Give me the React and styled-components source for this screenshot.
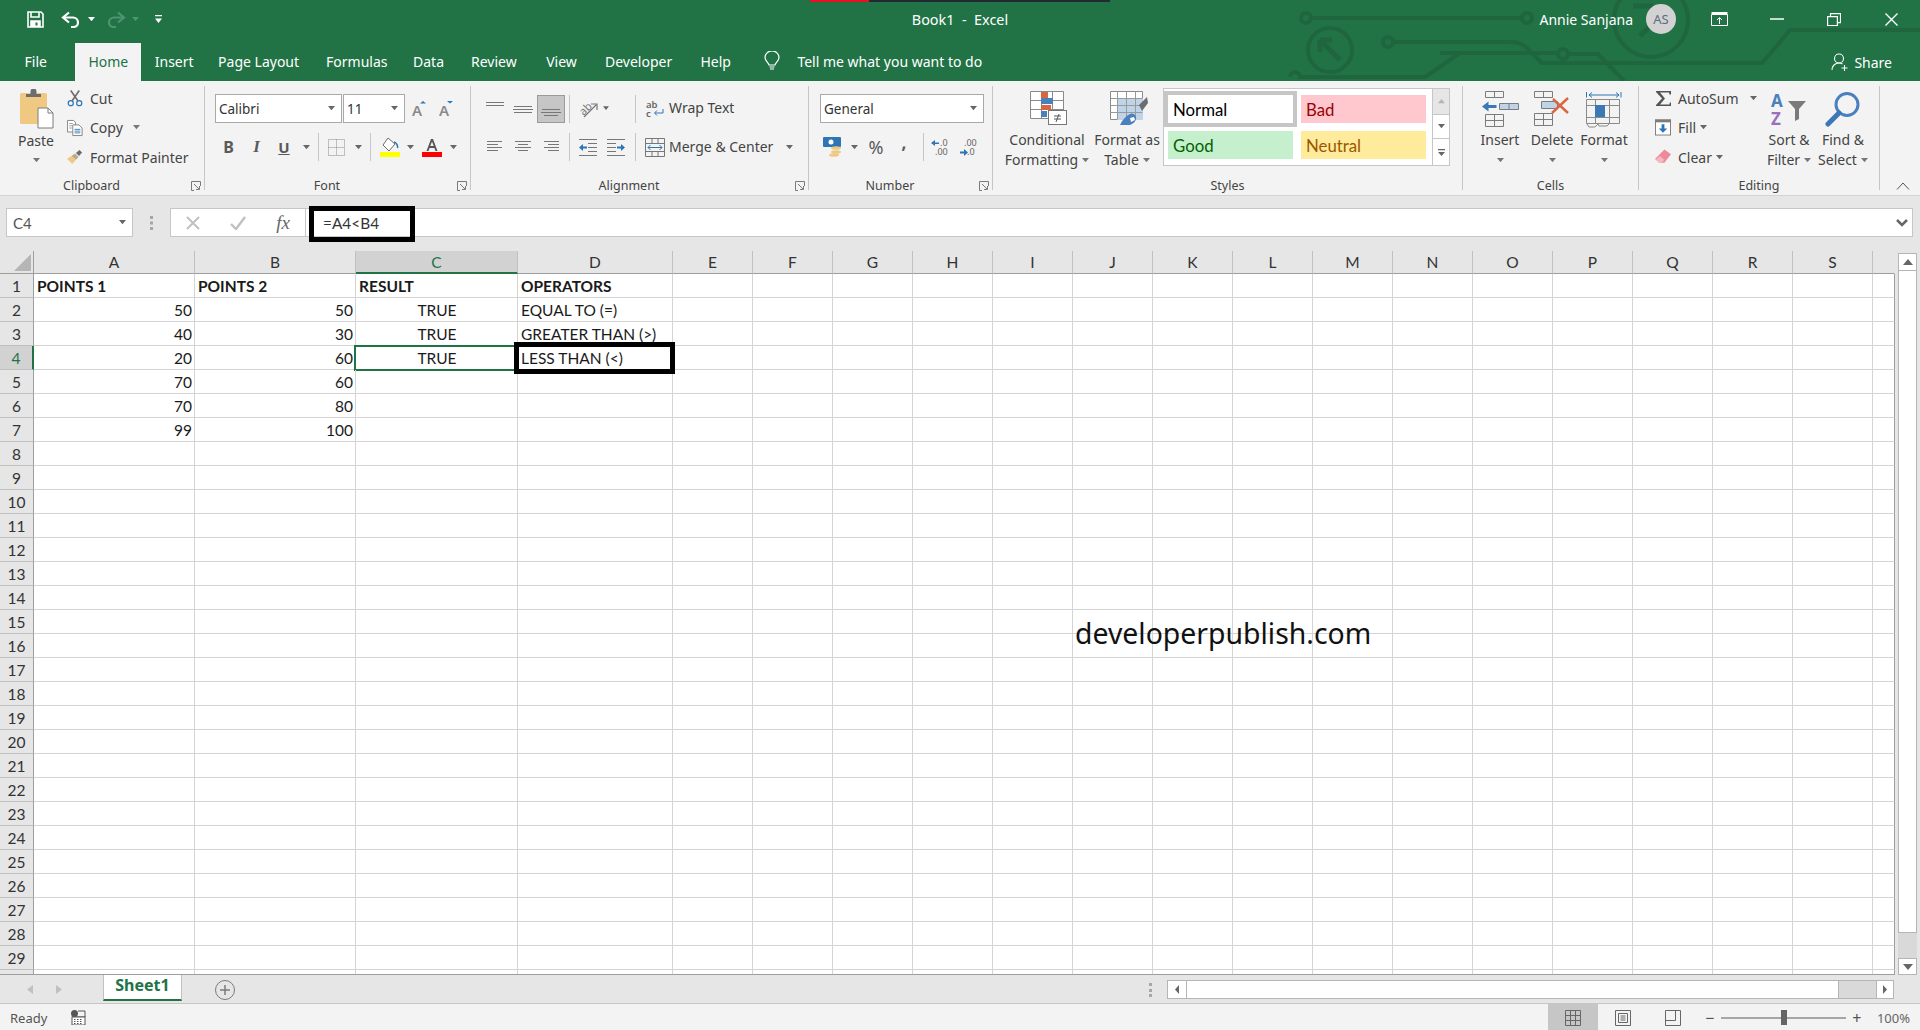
import React from "react";
import styled, { createGlobalStyle } from "styled-components";

const GlobalStyle = createGlobalStyle`
  html, body {
    margin: 0;
    padding: 0;
    overflow: hidden;
    background: #e6e6e6;
  }
  * {
    box-sizing: border-box;
  }
`;

const UI_FONT = `"Noto Sans", "Open Sans", sans-serif`;
const CELL_FONT = `Lato, "Noto Sans", sans-serif`;

const Page = styled.div`
  width: 1920px;
  height: 1030px;
  display: flex;
  flex-direction: column;
  overflow: hidden;
  font-family: ${UI_FONT};
  color: #444;
`;

/* title bar */
const TitleBar = styled.header`
  position: relative;
  height: 81px;
  background: #217346;
  color: #fff;
  flex: none;
`;

const Circuit = styled.svg`
  position: absolute;
  left: 0;
  top: 0;
  pointer-events: none;
`;

const LoadingLine = styled.div`
  position: absolute;
  left: 810px;
  top: 0;
  width: 300px;
  height: 2px;
  background: linear-gradient(90deg, #e81123 0 59px, #1f2a33 59px);
`;

const TopRow = styled.div`
  position: relative;
  height: 43px;
  display: grid;
  grid-template-columns: 1fr auto 1fr;
  align-items: center;
  padding-bottom: 5px;
`;

const Qat = styled.div`
  display: flex;
  align-items: center;
  padding-left: 26px;
`;

const QatSlot = styled.span`
  display: flex;
  align-items: center;
  justify-content: center;
  width: ${(p) => p.$w}px;
  margin-right: ${(p) => p.$gap || 0}px;
`;

const DocTitle = styled.div`
  font-size: 14.4px;
  white-space: pre;
`;

const WindowArea = styled.div`
  display: flex;
  align-items: center;
  justify-content: flex-end;
`;

const UserName = styled.span`
  font-size: 14px;
  margin-right: 13px;
`;

const Avatar = styled.span`
  width: 30px;
  height: 30px;
  border-radius: 50%;
  background: #d2d2d2;
  color: #5b6b7b;
  font-size: 13px;
  display: flex;
  align-items: center;
  justify-content: center;
  margin-right: 14px;
`;

const WinBtn = styled.span`
  width: ${(p) => p.$w}px;
  display: flex;
  justify-content: center;
`;

const TabRow = styled.nav`
  position: relative;
  height: 38px;
  display: flex;
  align-items: stretch;
  padding-left: 11px;
  font-size: 14px;
`;

const Tab = styled.span`
  display: flex;
  align-items: center;
  padding: 0 ${(p) => (p.$active ? 13 : 13.5)}px 2px;
  background: ${(p) => (p.$active ? "#f3f3f3" : "transparent")};
  color: ${(p) => (p.$active ? "#217346" : "#fff")};
  margin-right: ${(p) => p.$mr || 0}px;
`;

const TellMe = styled.span`
  display: flex;
  align-items: center;
  gap: 17px;
  margin-left: 20px;
  padding-bottom: 2px;
  color: #fff;
`;

const ShareBtn = styled.span`
  display: flex;
  align-items: center;
  gap: 5px;
  margin-left: auto;
  margin-right: 28px;
  padding-top: 1px;
  color: #fff;
`;

/* ribbon */
const Ribbon = styled.div`
  height: 115px;
  flex: none;
  background: #f3f3f3;
  border-bottom: 1px solid #d4d4d4;
  padding-top: 5px;
  display: flex;
  font-size: 14px;
`;

const Group = styled.section`
  position: relative;
  width: ${(p) => p.$w}px;
  height: 104px;
  border-right: 1px solid ${(p) => (p.$last ? "transparent" : "#c6c6c6")};
  flex: none;
`;

const GroupBody = styled.div`
  height: 90px;
  padding: ${(p) => p.$pad || "0"};
  display: ${(p) => (p.$col ? "block" : "flex")};
`;

const GroupLabel = styled.div`
  height: 14px;
  line-height: 20px;
  text-align: center;
  font-size: 12.5px;
  white-space: nowrap;
  padding-right: ${(p) => (p.$launch ? 21 : 0)}px;
`;

const Launcher = styled.svg`
  position: absolute;
  right: 3px;
  bottom: -1px;
`;

const Collapse = styled.svg`
  position: absolute;
  left: 16px;
  bottom: 0;
`;

const Paste = styled.div`
  width: 46px;
  display: flex;
  flex-direction: column;
  align-items: center;
  flex: none;
`;

const LargeBtn = styled.div`
  width: ${(p) => p.$w}px;
  margin-left: ${(p) => p.$ml || 0}px;
  display: flex;
  flex-direction: column;
  align-items: center;
  flex: none;
  line-height: 20px;
  white-space: nowrap;
`;

const LargeIcon = styled.div`
  height: 44px;
  margin-top: 1px;
  margin-bottom: -1px;
  padding-left: ${(p) => p.$shift || 0}px;
  display: flex;
  align-items: center;
  justify-content: center;
`;

const CaretLine = styled.div`
  height: 20px;
  display: flex;
  align-items: center;
  gap: 4px;
`;

const SmallStack = styled.div`
  width: ${(p) => p.$w}px;
  margin-left: ${(p) => p.$ml || 0}px;
  display: flex;
  flex-direction: column;
  gap: 5.5px;
  flex: none;
`;

const SmallRow = styled.div`
  height: 24px;
  display: flex;
  align-items: center;
  white-space: nowrap;
`;

const SmallIcon = styled.span`
  width: 16px;
  margin-right: 7px;
  display: flex;
  align-items: center;
  justify-content: center;
  flex: none;
`;

const ToolRow = styled.div`
  display: flex;
  align-items: center;
  height: ${(p) => p.$h || 28}px;
  margin-top: ${(p) => p.$mt || 0}px;
  white-space: nowrap;
`;

const Slot = styled.span`
  width: ${(p) => p.$w}px;
  height: 28px;
  margin-left: ${(p) => p.$ml || 0}px;
  display: flex;
  align-items: center;
  justify-content: center;
  flex: none;
  background: ${(p) => (p.$on ? "#c6c6c6" : "transparent")};
  box-shadow: ${(p) => (p.$on ? "inset 0 0 0 1px #9a9a9a" : "none")};
`;

const ToolLabel = styled.span`
  margin-left: ${(p) => p.$ml}px;
  margin-top: -2px;
`;

const ToolGlyph = styled.span`
  font-size: ${(p) => p.$size}px;
  font-weight: ${(p) => (p.$bold ? 700 : 400)};
  font-style: ${(p) => (p.$italic ? "italic" : "normal")};
  font-family: ${(p) => (p.$serif ? `"Liberation Serif", serif` : "inherit")};
  text-decoration: ${(p) => (p.$under ? "underline" : "none")};
  margin-top: ${(p) => p.$mt || 0}px;
  color: #5a5a5a;
`;

const ToolSep = styled.span`
  width: ${(p) => p.$w}px;
  height: 28px;
  flex: none;
  display: flex;
  justify-content: center;
  &::before {
    content: "";
    width: 1px;
    background: #c6c6c6;
  }
`;

const Combo = styled.div`
  width: ${(p) => p.$w}px;
  height: 29px;
  flex: none;
  margin-left: ${(p) => p.$ml || 0}px;
  background: #fff;
  border: 1px solid #a9a9a9;
  display: flex;
  align-items: center;
  justify-content: space-between;
  padding: 0 6px 0 3px;
  color: #333;
  font-size: 13.5px;
`;

const Gallery = styled.div`
  width: 287px;
  height: 78px;
  margin: 2px 0 0 0;
  flex: none;
  display: flex;
  background: #fff;
  border: 1px solid #c6c6c6;
`;

const StyleGrid = styled.div`
  width: 268px;
  padding: 6px 0 0 4px;
  display: grid;
  grid-template-columns: 125px 125px;
  grid-auto-rows: 28px;
  gap: 8px;
`;

const StyleCell = styled.div`
  background: ${(p) => p.$bg};
  color: ${(p) => p.$fg};
  outline: ${(p) => (p.$on ? "4px solid #c6c6c6" : "none")};
  font-family: ${CELL_FONT};
  font-size: 16.8px;
  display: flex;
  align-items: center;
  padding-left: 5px;
`;

const GalleryScroll = styled.div`
  flex: 1;
  border-left: 1px solid #c6c6c6;
  display: flex;
  flex-direction: column;
`;

const ScrollStep = styled.div`
  height: ${(p) => p.$h}px;
  background: ${(p) => (p.$off ? "#e6e6e6" : "#fff")};
  border-bottom: ${(p) => (p.$end ? "none" : "1px solid #c6c6c6")};
  display: flex;
  align-items: center;
  justify-content: center;
`;

/* formula bar */
const FormulaBar = styled.div`
  height: 55px;
  flex: none;
  background: #e6e6e6;
  padding: 12px 7px 0 6px;
  display: flex;
  align-items: flex-start;
`;

const NameBox = styled.div`
  width: 127px;
  height: 29px;
  background: #fff;
  border: 1px solid #c6c6c6;
  display: flex;
  align-items: center;
  justify-content: space-between;
  padding: 0 6px;
  font-family: ${CELL_FONT};
  font-size: 15px;
  color: #555;
`;

const Dots = styled.span`
  width: 37px;
  height: 29px;
  display: flex;
  align-items: center;
  justify-content: center;
`;

const FormulaTools = styled.div`
  width: 136px;
  height: 29px;
  background: #fff;
  border: 1px solid #c6c6c6;
  display: grid;
  grid-template-columns: 44px 46px 44px;
  align-items: center;
  justify-items: center;
`;

const FxMark = styled.i`
  font-family: "Liberation Serif", serif;
  font-size: 19px;
  color: #666;
`;

const FormulaInput = styled.div`
  position: relative;
  flex: 1;
  height: 29px;
  background: #fff;
  border: 1px solid #c6c6c6;
  border-left: none;
  display: flex;
  align-items: center;
  padding-left: 17px;
  font-family: ${CELL_FONT};
  font-size: 15.4px;
  color: #333;
`;

const Mark = styled.div`
  position: absolute;
  border: 5px solid #000;
  pointer-events: none;
  left: ${(p) => p.$l}px;
  top: ${(p) => p.$t}px;
  width: ${(p) => p.$w}px;
  height: ${(p) => p.$h}px;
  z-index: 3;
`;

const FormulaCaret = styled.svg`
  position: absolute;
  right: 4px;
  top: 10px;
`;

/* sheet */
const SheetArea = styled.div`
  height: 724px;
  flex: none;
  display: flex;
  background: #e6e6e6;
`;

const SheetGrid = styled.div`
  position: relative;
  width: 1895px;
  height: 724px;
  overflow: hidden;
  background: #fff;
  display: grid;
  grid-template-columns: 34px 161px 161px 162px 155px repeat(15, 80px) 22px;
  grid-template-rows: 23px repeat(30, 24px);
  font-family: ${CELL_FONT};
  font-size: 15.5px;
  color: #1a1a1a;
  border-bottom: 1px solid #9e9e9e;
`;

const Corner = styled.div`
  background: #e6e6e6;
  border-right: 1px solid #9e9e9e;
  border-bottom: 1px solid #9e9e9e;
  display: flex;
  align-items: flex-end;
  justify-content: flex-end;
  padding: 0 2px 2px 0;
`;

const ColHead = styled.div`
  background: ${(p) => (p.$on ? "#d2d2d2" : "#e6e6e6")};
  color: ${(p) => (p.$on ? "#217346" : "#333")};
  border-right: 1px solid ${(p) => (p.$blank ? "transparent" : "#c0c0c0")};
  border-bottom: ${(p) => (p.$on ? "2px solid #217346" : "1px solid #9e9e9e")};
  display: flex;
  align-items: center;
  justify-content: center;
`;

const RowHead = styled.div`
  background: ${(p) => (p.$on ? "#d2d2d2" : "#e6e6e6")};
  color: ${(p) => (p.$on ? "#217346" : "#333")};
  border-right: ${(p) => (p.$on ? "2px solid #217346" : "1px solid #9e9e9e")};
  border-bottom: 1px solid #c0c0c0;
  padding-top: 1px;
  display: flex;
  align-items: center;
  justify-content: center;
`;

const Cell = styled.div`
  position: relative;
  border-right: 1px solid ${(p) => (p.$edge ? "#9e9e9e" : "#d4d4d4")};
  border-bottom: 1px solid #d4d4d4;
  display: flex;
  align-items: center;
  justify-content: ${(p) => p.$align || "flex-start"};
  padding: 1px 2px 0 3px;
  font-weight: ${(p) => (p.$bold ? 700 : 400)};
  white-space: nowrap;
`;

const Selection = styled.div`
  position: absolute;
  left: -2px;
  top: -1px;
  right: -2px;
  bottom: -2px;
  border: 2px solid #217346;
`;

const Watermark = styled.div`
  position: absolute;
  left: 1075px;
  top: 363px;
  font-family: ${UI_FONT};
  font-size: 28.4px;
  color: #111;
  white-space: nowrap;
`;

const VScroll = styled.div`
  width: 25px;
  padding: 2px 3px 0 3px;
  display: flex;
  flex-direction: column;
`;

const ScrollBtn = styled.div`
  height: ${(p) => p.$h}px;
  flex: none;
  background: #fff;
  border: 1px solid #b5b5b5;
  display: flex;
  align-items: center;
  justify-content: center;
`;

const VThumb = styled.div`
  height: 662px;
  flex: none;
  background: #fff;
  border: 1px solid #b5b5b5;
  border-top: none;
`;

const VTrack = styled.div`
  flex: 1;
  background: #d9d9d9;
`;

/* sheet tabs */
const SheetBar = styled.div`
  height: 29px;
  flex: none;
  background: #e6e6e6;
  display: flex;
  align-items: flex-start;
  border-bottom: 1px solid #c6c6c6;
`;

const SheetNav = styled.div`
  width: 103px;
  height: 28px;
  display: flex;
  align-items: center;
  gap: 23px;
  padding-left: 27px;
`;

const SheetTab = styled.div`
  width: 79px;
  height: 26px;
  background: #fff;
  border: 1px solid #c0c0c0;
  border-top: none;
  border-bottom: 2px solid #217346;
  color: #217346;
  font-weight: 700;
  font-size: 16px;
  line-height: 20px;
  padding-bottom: 4px;
  display: flex;
  align-items: center;
  justify-content: center;
`;

const AddSheet = styled.div`
  width: 20px;
  height: 20px;
  margin: 5px 0 0 33px;
  border-radius: 50%;
  border: 1px solid #7b7b7b;
  display: flex;
  align-items: center;
  justify-content: center;
`;

const HScrollWrap = styled.div`
  margin-left: auto;
  margin-right: 26px;
  display: flex;
  align-items: center;
  height: 28px;
  padding-top: 1px;
`;

const VDots = styled.span`
  width: 3px;
  height: 14px;
  margin-right: 15px;
  background: repeating-linear-gradient(180deg, #a6a6a6 0 3px, transparent 3px 5.5px);
`;

const HScroll = styled.div`
  width: 727px;
  height: 19px;
  display: flex;
  background: #d9d9d9;
  border: 1px solid #b5b5b5;
`;

const HThumb = styled.div`
  width: 653px;
  background: #fff;
  border-left: 1px solid #b5b5b5;
  border-right: 1px solid #b5b5b5;
`;

const HBtn = styled.div`
  width: ${(p) => p.$w}px;
  margin-left: ${(p) => p.$ml || 0}px;
  background: #fff;
  border-left: ${(p) => (p.$ml ? "1px solid #b5b5b5" : "none")};
  display: flex;
  align-items: center;
  justify-content: center;
`;

/* status bar */
const StatusBar = styled.footer`
  height: 27px;
  flex: none;
  background: #f3f3f3;
  display: flex;
  align-items: center;
  font-size: 13px;
  color: #555;
  padding-left: 10px;
`;

const MacroIcon = styled.span`
  margin-left: 24px;
  display: flex;
`;

const ViewButtons = styled.div`
  margin-left: auto;
  display: flex;
  height: 100%;
`;

const ViewBtn = styled.span`
  width: 50px;
  display: flex;
  align-items: center;
  justify-content: center;
  background: ${(p) => (p.$on ? "#c6c6c6" : "transparent")};
`;

const ZoomBar = styled.div`
  display: flex;
  align-items: center;
  margin-left: 6px;
  padding-right: 10px;
`;

const ZoomSign = styled.span`
  font-size: 16px;
  width: 12px;
  text-align: center;
  color: #555;
`;

const Slider = styled.div`
  position: relative;
  width: 125px;
  height: 2px;
  background: #a6a6a6;
  margin: 0 5px;
`;

const SliderKnob = styled.span`
  position: absolute;
  left: 60px;
  top: -7px;
  width: 6px;
  height: 15px;
  background: #666;
`;

const ZoomPct = styled.span`
  margin-left: 14px;
  color: #666;
`;

/* --- drawings --- */
const Caret = ({ c = "#666", w = 7, up }) => (
  <svg width={w} height={w * 0.6} viewBox="0 0 7 4.2">
    <path d={up ? "M0 4.2h7L3.5 0z" : "M0 0h7L3.5 4.2z"} fill={c} />
  </svg>
);

const SaveIcon = () => (
  <svg width="17" height="17" viewBox="0 0 17 17" fill="none" stroke="#fff" strokeWidth="1.6">
    <path d="M1 1h13l2 2v13H1z" />
    <path d="M4 1v5h8V1" />
    <path d="M4 16v-6h9v6" fill="#fff" />
    <path d="M9.5 11.5v3" stroke="#217346" strokeWidth="2" />
  </svg>
);

const UndoIcon = ({ c = "#fff", flip }) => (
  <svg width="20" height="17" viewBox="0 0 20 17" fill="none" stroke={c} strokeWidth="2.2" style={flip ? { transform: "scaleX(-1)" } : undefined}>
    <path d="M8 1.5L2 6.5l6 5" />
    <path d="M2 6.5h10a5 5 0 0 1 5 5a4.5 4.5 0 0 1-4.5 4.5H10" />
  </svg>
);

const CustomizeIcon = () => (
  <svg width="7" height="9" viewBox="0 0 7 9" fill="#fff"><path d="M0 0h7v1.3H0zM0 3.5h7L3.5 8z" /></svg>
);

const BulbIcon = () => (
  <svg width="16" height="20" viewBox="0 0 16 20" fill="none" stroke="#fff" strokeWidth="1.2">
    <path d="M5 14c0-2-4-4-4-7.5a7 6.5 0 0 1 14 0C15 10 11 12 11 14z" />
    <path d="M5.5 16h5M6 18h4" />
  </svg>
);

const ShareIcon = () => (
  <svg width="18" height="19" viewBox="0 0 18 19" fill="none" stroke="#fff" strokeWidth="1.1">
    <circle cx="8" cy="5.5" r="4.5" />
    <path d="M1 17c0-4 3-7 7-7 1.5 0 2.5.4 3.500 1" />
    <path d="M13.5 12v6M10.5 15h6" />
  </svg>
);

const Launch = () => (
  <Launcher width="10" height="10" viewBox="0 0 10 10" fill="none" stroke="#7a7a7a">
    <path d="M.5 5V.5h9V5" />
    <path d="M.5 3v6.500H3M3 3l5 5M5 8.500h3.500V5" />
  </Launcher>
);

const PasteIcon = () => (
  <svg width="35" height="40" viewBox="0 0 35 40">
    <rect x="1" y="4" width="27" height="31" rx="1.5" fill="#efc982" />
    <path d="M7 8V5h4.500V2.500a2.500 2.500 0 0 1 6 0V5H22v3z" fill="#6d6d6d" />
    <path d="M19 19h10l5 5v15H19z" fill="#fff" stroke="#7c7c7c" />
    <path d="M29 19v5h5" fill="none" stroke="#7c7c7c" />
  </svg>
);

const CutIcon = () => (
  <svg width="17" height="18" viewBox="0 0 17 18" fill="none">
    <path d="M4 1l7.500 11M13 1L5.500 12" stroke="#6d6d6d" strokeWidth="1.7" />
    <circle cx="4" cy="14.5" r="2.7" stroke="#2e75b5" strokeWidth="1.3" />
    <circle cx="13" cy="14.5" r="2.7" stroke="#2e75b5" strokeWidth="1.3" />
  </svg>
);

const CopyIcon = () => (
  <svg width="18" height="18" viewBox="0 0 18 18" fill="#fff" stroke="#7a7a7a">
    <path d="M.5.5h7l2 2v11h-9z" />
    <path d="M6.5 5.5h7l3.500 3.500v8.500H6.500z" />
    <path d="M2.500 4h4M2.500 6.500h3M2.500 9h3" strokeWidth=".8" />
    <path d="M8.500 10.500h6.500M8.500 12.500h6.500M8.500 14.500h6.500" stroke="#2e75b5" />
  </svg>
);

const PainterIcon = () => (
  <svg width="18" height="16" viewBox="0 0 18 16">
    <path d="M0 10l5-3 5 4-4 5z" fill="#efc982" />
    <path d="M5 7l4-3 4 4-3 3z" fill="#b9a98c" />
    <path d="M10 3.500l4-3.500 3 3-3.500 4z" fill="#6d6d6d" />
  </svg>
);

const GrowIcon = ({ down }) => (
  <svg width="15" height="17" viewBox="0 0 15 17">
    <text x="0" y="16" fontFamily="Noto Sans" fontSize="15" fill="#8a8a8a" fontWeight="600">A</text>
    <path d={down ? "M8 1h6l-3 2.500z" : "M8 3.500h6L11 1z"} fill="#2e75b5" />
  </svg>
);

const BordersIcon = () => (
  <svg width="17" height="17" viewBox="0 0 17 17" fill="none" stroke="#8a8a8a" strokeDasharray="1 1">
    <path d="M.5.5h16v16H.5zM8.500.5v16M.5 8.500h16" />
  </svg>
);

const FillIcon = () => (
  <svg width="20" height="20" viewBox="0 0 20 20">
    <path d="M8 1l7 6-6 7-6-6z" fill="#fff" stroke="#6d6d6d" />
    <path d="M14 5c3 1 4 4 3.500 6" fill="none" stroke="#2e75b5" strokeWidth="1.5" />
    <rect y="15" width="20" height="5" fill="#ffff00" />
  </svg>
);

const ColorAIcon = () => (
  <svg width="20" height="20" viewBox="0 0 20 20">
    <path d="M4.500 14L9 2h2l4.500 12h-2l-1.100-3H7.600l-1.100 3zM8.300 9h3.400L10 4.500z" fill="#555" />
    <rect y="15" width="20" height="5" fill="#ff0000" />
  </svg>
);

const Lines = ({ rows, c = "#777" }) => (
  <svg width="20" height="18" viewBox="0 0 20 18" stroke={c} fill="none">
    {rows.map(([y, x1, x2]) => (
      <path key={y} d={`M${x1} ${y}.5H${x2}`} />
    ))}
  </svg>
);

const OrientIcon = () => (
  <svg width="20" height="20" viewBox="0 0 20 20" fill="none">
    <text x="1" y="14" fontFamily="Noto Sans" fontSize="11" fill="#777" transform="rotate(-45 7 10)">ab</text>
    <path d="M6 18L18 6M13 5h6v6" stroke="#777" strokeWidth="1.2" />
  </svg>
);

const IndentIcon = ({ flip }) => (
  <svg width="18" height="17" viewBox="0 0 18 17" style={flip ? { transform: "scaleX(-1)" } : undefined}>
    <path d="M0 .5h18M9 4.500h9M9 8.500h9M9 12.500h9M0 16.500h18" stroke="#777" fill="none" />
    <path d="M0 8.500L4 5v2.500h4v2H4V12z" fill="#2e75b5" />
  </svg>
);

const WrapIcon = () => (
  <svg width="18" height="17" viewBox="0 0 18 17">
    <text x="0" y="7.5" fontFamily="Noto Sans" fontSize="9.5" fontWeight="600" fill="#666">ab</text>
    <text x="0" y="16.5" fontFamily="Noto Sans" fontSize="9.5" fontWeight="600" fill="#666">c</text>
    <path d="M17 9v4H9M11 10.500L8.500 13l2.500 2.500" fill="none" stroke="#2e75b5" />
  </svg>
);

const MergeIcon = () => (
  <svg width="20" height="19" viewBox="0 0 20 19" fill="none" stroke="#777">
    <path d="M.5.5h19v18H.5zM.5 5.500h19M.5 13.500h19M7 .5v5M13 .5v5M7 13.500v5M13 13.500v5" />
    <path d="M3 9.500h14M5.500 7L3 9.500 5.500 12M14.500 7L17 9.500 14.500 12" stroke="#2e75b5" />
  </svg>
);

const CurrencyIcon = () => (
  <svg width="20" height="20" viewBox="0 0 20 20">
    <rect width="18" height="10" rx="1" fill="#2e75b5" />
    <circle cx="8" cy="5" r="2.5" fill="#fff" />
    <ellipse cx="13" cy="11" rx="5" ry="1.8" fill="#efc982" />
    <ellipse cx="13" cy="15" rx="5" ry="1.8" fill="#efc982" />
    <ellipse cx="11" cy="18" rx="5" ry="1.8" fill="#efc982" />
  </svg>
);

const DecimalIcon = ({ dec }) => (
  <svg width="22" height="18" viewBox="0 0 22 18">
    <text x={dec ? 6 : 9} y="7.5" fontFamily="Noto Sans" fontSize="9" fill="#666">{dec ? ".00" : ".0"}</text>
    <text x={dec ? 9 : 4} y="16.5" fontFamily="Noto Sans" fontSize="9" fill="#666">{dec ? ".0" : ".00"}</text>
    <path d={dec ? "M2 13.500h4V11l4 3.500-4 3.500v-2.500H2z" : "M8 4.500H4V2L0 5l4 3V6h4z"} fill="#2e75b5" />
  </svg>
);

const CondIcon = () => (
  <svg width="38" height="36" viewBox="0 0 38 36">
    <path d="M.5.5h33v27H.5zM.5 9.500h33M.5 18.500h33M11.500.5v27M22.500.5v27" fill="#fff" stroke="#8a8a8a" />
    <rect x="11" y="1" width="7" height="6" fill="#d9663f" />
    <rect x="11" y="7" width="12" height="6" fill="#4a80bd" />
    <rect x="11" y="14" width="10" height="5" fill="#d9663f" />
    <rect x="11" y="20" width="6" height="6" fill="#4a80bd" />
    <rect x="18.5" y="19.5" width="18" height="14" fill="#fff" stroke="#777" />
    <path d="M24 25h7M24 28h7M26 31l3-8" stroke="#555" fill="none" />
  </svg>
);

const TableIcon = () => (
  <svg width="38" height="36" viewBox="0 0 38 36">
    <path d="M.5.5h32v28H.5z" fill="#fff" stroke="#8a8a8a" />
    <rect x="7" y="7" width="26" height="22" fill="#c0d4e9" />
    <path d="M.5 7.500h32M.5 14.500h32M.5 21.500h32M7.500.5v28M16.500.5v28M25.500.5v28" stroke="#9a9a9a" fill="none" />
    <path d="M29 14l8-8 1 6-6 8z" fill="#6d6d6d" />
    <path d="M10 34c2-5 6-9 10-11 3-2 7 2 6 5-1 4-5 6-8 6z" fill="#4a80bd" />
    <path d="M20 27l4-1 1 3-4 2z" fill="#fff" />
  </svg>
);

const InsertCellIcon = () => (
  <svg width="37" height="36" viewBox="0 0 37 36" fill="none" stroke="#7c7c7c">
    <path d="M3.500.5h18v6h-18zM12.500.5v6M3.500 23.500h18v12h-18zM12.500 23.500v12M3.500 29.500h18" />
    <path d="M17.500 12.500h19v6h-19z" fill="#c0d4e9" />
    <path d="M27 12.500v6" />
    <path d="M0 15.500l6.500-5v3.500h8v3h-8v3.500z" fill="#3b78b5" stroke="none" />
  </svg>
);

const DeleteCellIcon = () => (
  <svg width="37" height="36" viewBox="0 0 37 36" fill="none" stroke="#7c7c7c">
    <path d="M.5.5h18v6H.5zM9.500.5v6M.5 22.500h18v12H.5zM9.500 22.500v12M.5 28.500h18" />
    <path d="M7.500 10.500h16v7h-16z" fill="#c0d4e9" />
    <path d="M19 8l15 14M34 7L18 22" stroke="#d9663f" strokeWidth="2.4" />
  </svg>
);

const FormatCellIcon = () => (
  <svg width="36" height="37" viewBox="0 0 36 37" fill="none" stroke="#8a8a8a">
    <path d="M.5 1v5.500M35 1v5.500" stroke="#2e75b5" />
    <path d="M3 4h30M3 4l3-2.500M3 4l3 2.500M33 4l-3-2.500M33 4l-3 2.500" stroke="#2e75b5" />
    <path d="M.5 8.500h33v24H.5zM.5 14.500h33M.5 26.500h33M9.500 8.500v24M23.500 8.500v24" />
    <rect x="9" y="14" width="10" height="12" fill="#3b78b5" stroke="none" />
    <path d="M1 33l2 3h6l3-3M12 33l1 2h8l2-2" />
  </svg>
);

const SumIcon = () => (
  <svg width="15" height="15" viewBox="0 0 15 15"><path d="M0 0h15v3.500h-1.500l-.5-2H4l5 6-5 6h9.500l.3-2H15V15H0v-1l6-6.500L0 1z" fill="#555" /></svg>
);

const FillDownIcon = () => (
  <svg width="17" height="17" viewBox="0 0 17 17">
    <rect x=".5" y=".5" width="16" height="16" fill="#fff" stroke="#7c7c7c" />
    <rect width="17" height="3" fill="#7c7c7c" />
    <path d="M8.500 14L4 9.500h3V5h3v4.500h3z" fill="#2e75b5" />
  </svg>
);

const EraserIcon = () => (
  <svg width="17" height="16" viewBox="0 0 17 16">
    <path d="M10 0l7 5-7 9H5L0 10z" fill="#ee8a9a" />
    <path d="M5 7l5 4-3 3H4l-3-3z" fill="#f5b8c2" />
  </svg>
);

const SortIcon = () => (
  <svg width="36" height="34" viewBox="0 0 36 34">
    <text x="0" y="15" fontFamily="Noto Sans" fontSize="17" fontWeight="700" fill="#4a80bd">A</text>
    <text x="0" y="33" fontFamily="Noto Sans" fontSize="17" fontWeight="700" fill="#9a6fbd">Z</text>
    <path d="M17 9h18l-7 8v10l-4 2V17z" fill="#7a7a7a" />
  </svg>
);

const FindIcon = () => (
  <svg width="36" height="36" viewBox="0 0 36 36" fill="none">
    <circle cx="22" cy="13.5" r="11" stroke="#4a80bd" strokeWidth="3" />
    <path d="M14 22L3 33" stroke="#3b78b5" strokeWidth="5" strokeLinecap="round" />
  </svg>
);

const LargeLabel = ({ lines, below }) => (
  <>
    {lines.map((line, i) => (
      <CaretLine key={line}>
        {line}
        {!below && i === lines.length - 1 && <Caret c="#777" />}
      </CaretLine>
    ))}
    {below && (
      <CaretLine>
        <Caret c="#777" />
      </CaretLine>
    )}
  </>
);

const COLS = ["A", "B", "C", "D", "E", "F", "G", "H", "I", "J", "K", "L", "M", "N", "O", "P", "Q", "R", "S", ""];
const ROWS = Array.from({ length: 30 }, (_, i) => i + 1);

const DATA = {
  A1: ["POINTS 1", "bold"], B1: ["POINTS 2", "bold"], C1: ["RESULT", "bold"], D1: ["OPERATORS", "bold"],
  A2: ["50", "num"], B2: ["50", "num"], C2: ["TRUE", "bool"], D2: ["EQUAL TO (=)"],
  A3: ["40", "num"], B3: ["30", "num"], C3: ["TRUE", "bool"], D3: ["GREATER THAN (>)"],
  A4: ["20", "num"], B4: ["60", "num"], C4: ["TRUE", "bool"], D4: ["LESS THAN (<)"],
  A5: ["70", "num"], B5: ["60", "num"],
  A6: ["70", "num"], B6: ["80", "num"],
  A7: ["99", "num"], B7: ["100", "num"],
};

const ALIGN = { num: "flex-end", bool: "center" };

const Sheet = () => (
  <SheetGrid>
    <Corner>
      <svg width="17" height="17" viewBox="0 0 17 17"><path d="M17 0v17H0z" fill="#b5b5b5" /></svg>
    </Corner>
    {COLS.map((c) => (
      <ColHead key={c || "blank"} $on={c === "C"} $blank={c === ""}>{c}</ColHead>
    ))}
    {ROWS.map((r) => (
      <React.Fragment key={r}>
        <RowHead $on={r === 4}>{r}</RowHead>
        {COLS.map((c) => {
          const [text, kind] = DATA[`${c}${r}`] || [];
          return (
            <Cell key={c} $edge={c === ""} $bold={kind === "bold"} $align={ALIGN[kind]}>
              {text}
              {c === "C" && r === 4 && <Selection />}
            </Cell>
          );
        })}
      </React.Fragment>
    ))}
    <Mark $l={514} $t={91} $w={161} $h={32} />
    <Watermark>developerpublish.com</Watermark>
  </SheetGrid>
);

export default function App() {
  return (
    <Page>
      <GlobalStyle />
      <TitleBar>
        <Circuit width="1920" height="81" viewBox="0 0 1920 81" fill="none" stroke="#1f663f" strokeWidth="4">
          <circle cx="1306" cy="18" r="5" />
          <path d="M1311 18h210" />
          <circle cx="1527" cy="18" r="5" />
          <circle cx="1388" cy="42" r="5" />
          <path d="M1393 42h117c10 0 14 3 20 9l12 12h220l28-33h160" />
          <circle cx="1330" cy="50" r="22" />
          <path d="M1320 40h12M1320 40v12M1320 40l20 20" strokeWidth="5" />
          <path d="M1290 77a5 5 0 0 1 10 0h125l35-24h50" />
          <circle cx="1563" cy="54" r="5" />
          <path d="M1440 53h118M1568 54h30l26 27" />
          <circle cx="1651" cy="20" r="37" />
          <path d="M1633 6h20M1640 36l18-18" strokeWidth="5" />
        </Circuit>
        <LoadingLine />
        <TopRow>
          <Qat>
            <QatSlot $w={18} $gap={17}><SaveIcon /></QatSlot>
            <QatSlot $w={20} $gap={7}><UndoIcon /></QatSlot>
            <QatSlot $w={7} $gap={11}><Caret c="#fff" /></QatSlot>
            <QatSlot $w={20} $gap={6}><UndoIcon c="#4f9470" flip /></QatSlot>
            <QatSlot $w={7} $gap={16}><Caret c="#4f9470" /></QatSlot>
            <QatSlot $w={7}><CustomizeIcon /></QatSlot>
          </Qat>
          <DocTitle>{"Book1  -  Excel"}</DocTitle>
          <WindowArea>
            <UserName>Annie Sanjana</UserName>
            <Avatar>AS</Avatar>
            <WinBtn $w={58}>
              <svg width="17" height="14" viewBox="0 0 17 14" fill="none" stroke="#fff"><path d="M.5 2.500h16v11H.5z" /><path d="M.5 1h16" strokeWidth="2" /><path d="M8.500 12V6M6 8l2.500-2.500L11 8" /></svg>
            </WinBtn>
            <WinBtn $w={58}>
              <svg width="14" height="2" viewBox="0 0 14 2"><path d="M0 1h14" stroke="#fff" strokeWidth="1.5" /></svg>
            </WinBtn>
            <WinBtn $w={56}>
              <svg width="14" height="13" viewBox="0 0 14 13" fill="none" stroke="#fff" strokeWidth="1.2"><path d="M.6 3.600h9.800v9H.6zM3.500 3.500V.6h10v9h-3" /></svg>
            </WinBtn>
            <WinBtn $w={58}>
              <svg width="13" height="13" viewBox="0 0 13 13" stroke="#fff" strokeWidth="1.4"><path d="M.5.5l12 12M12.500.5l-12 12" /></svg>
            </WinBtn>
          </WindowArea>
        </TopRow>
        <TabRow>
          <Tab $mr={15}>File</Tab>
          <Tab $active>Home</Tab>
          <Tab $mr={-2.5}>Insert</Tab>
          <Tab>Page Layout</Tab>
          <Tab $mr={-1.5}>Formulas</Tab>
          <Tab>Data</Tab>
          <Tab $mr={2.5}>Review</Tab>
          <Tab $mr={1.2}>View</Tab>
          <Tab $mr={1.2}>Developer</Tab>
          <Tab>Help</Tab>
          <TellMe><BulbIcon />Tell me what you want to do</TellMe>
          <ShareBtn><ShareIcon />Share</ShareBtn>
        </TabRow>
      </TitleBar>

      <Ribbon>
        <Group $w={205}>
          <GroupBody $pad="0 0 0 13px">
            <Paste>
              <LargeIcon><PasteIcon /></LargeIcon>
              <CaretLine>Paste</CaretLine>
              <CaretLine><Caret c="#777" /></CaretLine>
            </Paste>
            <SmallStack $w={130} $ml={8}>
              <SmallRow><SmallIcon><CutIcon /></SmallIcon>Cut</SmallRow>
              <SmallRow><SmallIcon><CopyIcon /></SmallIcon>Copy<Slot $w={10} $ml={9}><Caret c="#777" /></Slot></SmallRow>
              <SmallRow><SmallIcon><PainterIcon /></SmallIcon>Format Painter</SmallRow>
            </SmallStack>
          </GroupBody>
          <GroupLabel $launch>Clipboard</GroupLabel>
          <Launch />
        </Group>

        <Group $w={266}>
          <GroupBody $col $pad="8px 0 0 10px">
            <ToolRow $h={29}>
              <Combo $w={127}>Calibri<Caret /></Combo>
              <Combo $w={62} $ml={1}>11<Caret /></Combo>
              <Slot $w={28}><GrowIcon /></Slot>
              <Slot $w={26}><GrowIcon down /></Slot>
            </ToolRow>
            <ToolRow $mt={10}>
              <Slot $w={27}><ToolGlyph $size={16} $bold>B</ToolGlyph></Slot>
              <Slot $w={29}><ToolGlyph $size={17} $bold $italic $serif>I</ToolGlyph></Slot>
              <Slot $w={26}><ToolGlyph $size={15} $bold $under>U</ToolGlyph></Slot>
              <Slot $w={18}><Caret /></Slot>
              <ToolSep $w={6} />
              <Slot $w={30}><BordersIcon /></Slot>
              <Slot $w={14}><Caret /></Slot>
              <ToolSep $w={10} />
              <Slot $w={30}><FillIcon /></Slot>
              <Slot $w={10}><Caret /></Slot>
              <Slot $w={34}><ColorAIcon /></Slot>
              <Slot $w={8}><Caret /></Slot>
            </ToolRow>
          </GroupBody>
          <GroupLabel $launch>Font</GroupLabel>
          <Launch />
        </Group>

        <Group $w={338}>
          <GroupBody $col $pad="8px 0 0 10px">
            <ToolRow $h={29}>
              <Slot $w={28}><Lines rows={[[2, 1, 19], [5, 1, 19]]} /></Slot>
              <Slot $w={28}><Lines rows={[[6, 1, 19], [9, 0, 20], [12, 1, 19]]} /></Slot>
              <Slot $w={28} $on><Lines rows={[[9, 1, 19], [12, 0, 20], [15, 3, 17]]} /></Slot>
              <ToolSep $w={8} />
              <Slot $w={30}><OrientIcon /></Slot>
              <Slot $w={6}><Caret /></Slot>
              <ToolSep $w={53} />
              <Slot $w={18} $ml={-16}><WrapIcon /></Slot>
              <ToolLabel $ml={5}>Wrap Text</ToolLabel>
            </ToolRow>
            <ToolRow $mt={10}>
              <Slot $w={28}><Lines rows={[[3, 2, 17], [6, 2, 13], [9, 2, 17], [12, 2, 13]]} /></Slot>
              <Slot $w={28}><Lines rows={[[3, 2, 18], [6, 5, 15], [9, 2, 18], [12, 5, 15]]} /></Slot>
              <Slot $w={28}><Lines rows={[[3, 3, 18], [6, 7, 18], [9, 3, 18], [12, 7, 18]]} /></Slot>
              <ToolSep $w={8} />
              <Slot $w={29}><IndentIcon /></Slot>
              <Slot $w={28}><IndentIcon flip /></Slot>
              <ToolSep $w={10} />
              <Slot $w={20} $ml={5}><MergeIcon /></Slot>
              <ToolLabel $ml={4}>Merge &amp; Center</ToolLabel>
              <Slot $w={10} $ml={11}><Caret /></Slot>
            </ToolRow>
          </GroupBody>
          <GroupLabel $launch>Alignment</GroupLabel>
          <Launch />
        </Group>

        <Group $w={184}>
          <GroupBody $col $pad="8px 0 0 11px">
            <ToolRow $h={29}>
              <Combo $w={164}>General<Caret /></Combo>
            </ToolRow>
            <ToolRow $mt={10}>
              <Slot $w={26}><CurrencyIcon /></Slot>
              <Slot $w={16}><Caret /></Slot>
              <Slot $w={28}><ToolGlyph $size={18}>%</ToolGlyph></Slot>
              <Slot $w={28}><ToolGlyph $size={17} $bold $mt={-9}>,</ToolGlyph></Slot>
              <ToolSep $w={10} />
              <Slot $w={28}><DecimalIcon /></Slot>
              <Slot $w={26}><DecimalIcon dec /></Slot>
            </ToolRow>
          </GroupBody>
          <GroupLabel $launch>Number</GroupLabel>
          <Launch />
        </Group>

        <Group $w={470}>
          <GroupBody $pad="0 0 0 17px">
            <LargeBtn $w={74}>
              <LargeIcon $shift={3}><CondIcon /></LargeIcon>
              <LargeLabel lines={["Conditional", "Formatting"]} />
            </LargeBtn>
            <LargeBtn $w={72} $ml={7}>
              <LargeIcon $shift={3}><TableIcon /></LargeIcon>
              <LargeLabel lines={["Format as", "Table"]} />
            </LargeBtn>
            <Gallery>
              <StyleGrid>
                <StyleCell $on $bg="#fff" $fg="#000">Normal</StyleCell>
                <StyleCell $bg="#ffc7ce" $fg="#9c0006">Bad</StyleCell>
                <StyleCell $bg="#c6efce" $fg="#006100">Good</StyleCell>
                <StyleCell $bg="#ffeb9c" $fg="#9c5700">Neutral</StyleCell>
              </StyleGrid>
              <GalleryScroll>
                <ScrollStep $h={26} $off><Caret c="#b5b5b5" up /></ScrollStep>
                <ScrollStep $h={24}><Caret /></ScrollStep>
                <ScrollStep $h={26} $end>
                  <svg width="7" height="7" viewBox="0 0 7 7" fill="#666"><path d="M0 0h7v1.2H0zM0 3h7L3.500 7z" /></svg>
                </ScrollStep>
              </GalleryScroll>
            </Gallery>
          </GroupBody>
          <GroupLabel>Styles</GroupLabel>
        </Group>

        <Group $w={176}>
          <GroupBody $pad="0 0 0 11px">
            <LargeBtn $w={52}>
              <LargeIcon><InsertCellIcon /></LargeIcon>
              <LargeLabel lines={["Insert"]} below />
            </LargeBtn>
            <LargeBtn $w={52}>
              <LargeIcon><DeleteCellIcon /></LargeIcon>
              <LargeLabel lines={["Delete"]} below />
            </LargeBtn>
            <LargeBtn $w={52}>
              <LargeIcon><FormatCellIcon /></LargeIcon>
              <LargeLabel lines={["Format"]} below />
            </LargeBtn>
          </GroupBody>
          <GroupLabel>Cells</GroupLabel>
        </Group>

        <Group $w={241}>
          <GroupBody $pad="0 0 0 16px">
            <SmallStack $w={107}>
              <SmallRow><SmallIcon><SumIcon /></SmallIcon>AutoSum<Slot $w={10} $ml={10}><Caret /></Slot></SmallRow>
              <SmallRow><SmallIcon><FillDownIcon /></SmallIcon>Fill<Slot $w={10} $ml={2}><Caret /></Slot></SmallRow>
              <SmallRow><SmallIcon><EraserIcon /></SmallIcon>Clear<Slot $w={10} $ml={2}><Caret /></Slot></SmallRow>
            </SmallStack>
            <LargeBtn $w={54}>
              <LargeIcon><SortIcon /></LargeIcon>
              <LargeLabel lines={["Sort &", "Filter"]} />
            </LargeBtn>
            <LargeBtn $w={54}>
              <LargeIcon><FindIcon /></LargeIcon>
              <LargeLabel lines={["Find &", "Select"]} />
            </LargeBtn>
          </GroupBody>
          <GroupLabel>Editing</GroupLabel>
        </Group>

        <Group $w={40} $last>
          <Collapse width="14" height="8" viewBox="0 0 14 8" fill="none" stroke="#555"><path d="M1 7.500l6-6.500 6 6.500" /></Collapse>
        </Group>
      </Ribbon>

      <FormulaBar>
        <NameBox>C4<Caret /></NameBox>
        <Dots>
          <svg width="3" height="14" viewBox="0 0 3 14" fill="#a6a6a6"><rect width="3" height="3" /><rect y="5.5" width="3" height="3" /><rect y="11" width="3" height="3" /></svg>
        </Dots>
        <FormulaTools>
          <svg width="14" height="14" viewBox="0 0 14 14" stroke="#c0c0c0" strokeWidth="2"><path d="M1 1l12 12M13 1L1 13" /></svg>
          <svg width="16" height="14" viewBox="0 0 16 14" fill="none" stroke="#c0c0c0" strokeWidth="2.4"><path d="M1 8l5 5 9-12" /></svg>
          <FxMark>fx</FxMark>
        </FormulaTools>
        <FormulaInput>
          =A4&lt;B4
          <Mark $l={3} $t={-3} $w={106} $h={36} />
          <FormulaCaret width="12" height="8" viewBox="0 0 12 8" fill="none" stroke="#666" strokeWidth="2.5"><path d="M1 1l5 5 5-5" /></FormulaCaret>
        </FormulaInput>
      </FormulaBar>

      <SheetArea>
        <Sheet />
        <VScroll>
          <ScrollBtn $h={18}><Caret c="#666" w={10} up /></ScrollBtn>
          <VThumb />
          <VTrack />
          <ScrollBtn $h={17}><Caret c="#666" w={10} /></ScrollBtn>
        </VScroll>
      </SheetArea>

      <SheetBar>
        <SheetNav>
          <svg width="6" height="9" viewBox="0 0 6 9"><path d="M6 0v9L0 4.500z" fill="#c0c0c0" /></svg>
          <svg width="6" height="9" viewBox="0 0 6 9"><path d="M0 0v9l6-4.500z" fill="#c0c0c0" /></svg>
        </SheetNav>
        <SheetTab>Sheet1</SheetTab>
        <AddSheet>
          <svg width="10" height="10" viewBox="0 0 10 10"><path d="M5 0v10M0 5h10" stroke="#7b7b7b" strokeWidth="1.5" /></svg>
        </AddSheet>
        <HScrollWrap>
          <VDots />
          <HScroll>
            <HBtn $w={18}><svg width="4" height="9" viewBox="0 0 4 9"><path d="M4 0v9L0 4.500z" fill="#666" /></svg></HBtn>
            <HThumb />
            <HBtn $w={17} $ml={37}><svg width="4" height="9" viewBox="0 0 4 9"><path d="M0 0v9l4-4.500z" fill="#666" /></svg></HBtn>
          </HScroll>
        </HScrollWrap>
      </SheetBar>

      <StatusBar>
        Ready
        <MacroIcon>
          <svg width="15" height="15" viewBox="0 0 15 15">
            <circle cx="3.5" cy="3.5" r="3.5" fill="#555" />
            <path d="M1 7h13V1H7" fill="none" stroke="#555" />
            <rect x="1" y="7" width="13" height="8" fill="#fff" stroke="#555" />
            <path d="M3 9.500h9M3 11.500h9M3 13.500h9" stroke="#555" strokeDasharray="1.5 1.5" />
          </svg>
        </MacroIcon>
        <ViewButtons>
          <ViewBtn $on>
            <svg width="16" height="16" viewBox="0 0 16 16" fill="none" stroke="#666"><path d="M.5.5h15v15H.5zM5.500.5v15M10.500.5v15M.5 5.500h15M.5 10.500h15" /></svg>
          </ViewBtn>
          <ViewBtn>
            <svg width="16" height="16" viewBox="0 0 16 16" fill="none" stroke="#666"><path d="M.5.5h15v15H.5z" /><path d="M3.500 3.500h9v9h-9zM5.500 6h5M5.500 8h5M5.500 10h5" /></svg>
          </ViewBtn>
          <ViewBtn>
            <svg width="16" height="16" viewBox="0 0 16 16" fill="none" stroke="#666"><path d="M.5.5h15v15H.5zM.5 10.500h10V.5" /></svg>
          </ViewBtn>
        </ViewButtons>
        <ZoomBar>
          <ZoomSign>−</ZoomSign>
          <Slider><SliderKnob /></Slider>
          <ZoomSign>+</ZoomSign>
          <ZoomPct>100%</ZoomPct>
        </ZoomBar>
      </StatusBar>
    </Page>
  );
}
